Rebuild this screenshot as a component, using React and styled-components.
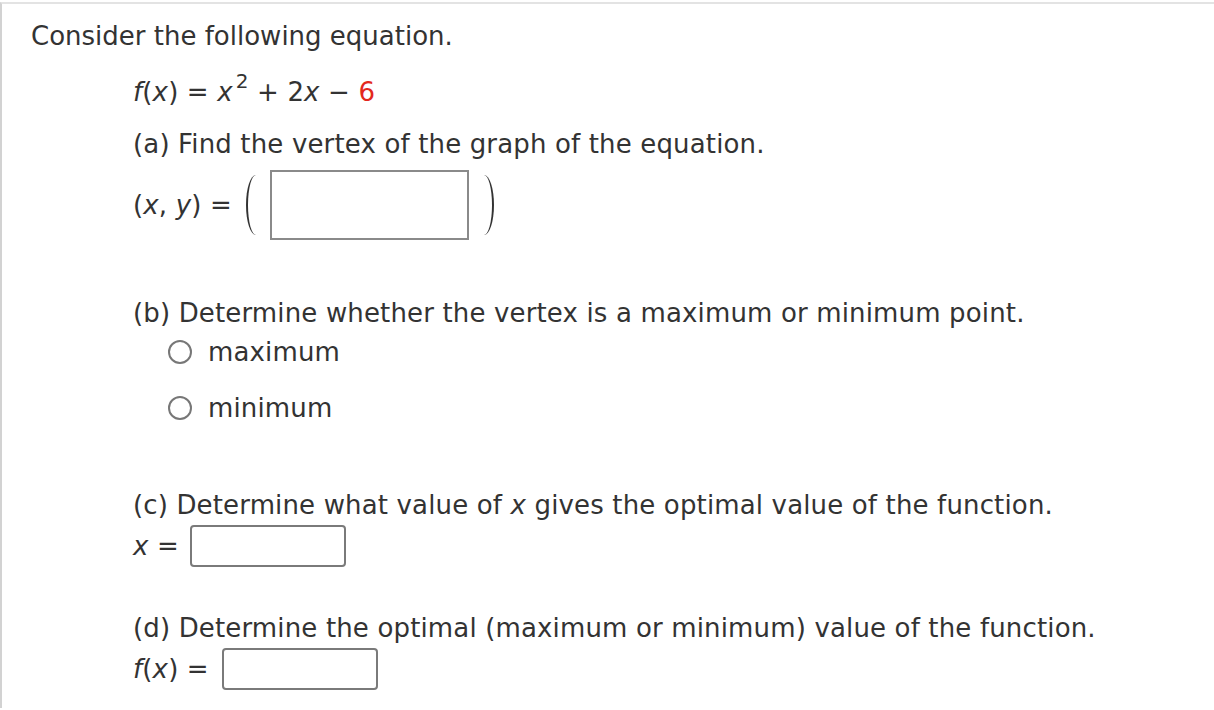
import styled, { createGlobalStyle } from 'styled-components';

const GlobalStyle = createGlobalStyle`
    html, body {
        margin: 0;
        padding: 0;
        background: #fff;
    }
    body {
        font-family: "DejaVu Sans", Verdana, sans-serif;
        color: #333;
        letter-spacing: 0.15px;
    }
`;

const Frame = styled.div`
    margin-top: 2px;
    border-top: 2px solid #e3e3e3;
    border-left: 2px solid #d2d2d2;
    height: 706px;
    box-sizing: border-box;
    padding: 15px 0 0 29px;
`;

const Line = styled.div`
    font-size: 26px;
    line-height: 34px;
    height: 34px;
    margin-top: ${({gap}) => gap || 0}px;
    white-space: nowrap;
`;

const Title = styled(Line)`
    letter-spacing: 0;
`;

const Indent = styled.div`
    padding-left: ${({left}) => left || 102}px;
`;

const I = styled.i`
    font-style: italic;
`;

const Sup = styled.sup`
    font-size: 20px;
    line-height: 0;
    position: relative;
    top: -3px;
    margin-left: 3px;
`;

const Red = styled.span`
    color: #e3281c;
`;

const Row = styled.div`
    display: flex;
    align-items: center;
    font-size: 26px;
    margin-top: ${({gap}) => gap || 0}px;
    white-space: nowrap;
`;

const Label = styled.span`
    margin-right: ${({space}) => space}px;
`;

const Paren = styled.span`
    display: inline-block;
    width: 10px;
    height: 60px;
    box-sizing: border-box;
    border-${({side}) => side}: 2px solid #333;
    border-radius: ${({side}) => side === 'left' ? '100% 0 0 100% / 50% 0 0 50%' : '0 100% 100% 0 / 0 50% 50% 0'};
`;

const BigBox = styled.div`
    width: 199px;
    height: 70px;
    box-sizing: border-box;
    border: 2px solid #8a8a8a;
    margin: 0 15px 0 14px;
`;

const AnswerBox = styled.div`
    width: 156px;
    height: 42px;
    box-sizing: border-box;
    border: 2px solid #7a7a7a;
    border-radius: 4px;
`;

const Radio = styled.label`
    display: flex;
    align-items: center;
    height: 34px;
    font-size: 26px;
    margin-top: ${({gap}) => gap || 0}px;
    padding-left: 35px;
`;

const Circle = styled.span`
    width: 24px;
    height: 24px;
    box-sizing: border-box;
    border: 2px solid #777;
    border-radius: 50%;
    margin-right: 16px;
`;

function App() {
    return <>
        <GlobalStyle />
        <Frame>
            <Title>Consider the following equation.</Title>
            <Indent>
                <Line gap={22}>
                    <I>f</I>(<I>x</I>) = <I>x</I><Sup>2</Sup> + 2<I>x</I> − <Red>6</Red>
                </Line>
                <Line gap={18}>(a) Find the vertex of the graph of the equation.</Line>
                <Row gap={9}>
                    <Label space={14}>(<I>x</I>, <I>y</I>) =</Label>
                    <Paren side="left" />
                    <BigBox />
                    <Paren side="right" />
                </Row>
                <Line gap={56}>(b) Determine whether the vertex is a maximum or minimum point.</Line>
                <Radio gap={5}><Circle />maximum</Radio>
                <Radio gap={22}><Circle />minimum</Radio>
                <Line gap={63}>(c) Determine what value of <I>x</I> gives the optimal value of the function.</Line>
                <Row gap={3}>
                    <Label space={11}><I>x</I> =</Label>
                    <AnswerBox />
                </Row>
                <Line gap={44}>(d) Determine the optimal (maximum or minimum) value of the function.</Line>
                <Row gap={3}>
                    <Label space={13}><I>f</I>(<I>x</I>) =</Label>
                    <AnswerBox />
                </Row>
            </Indent>
        </Frame>
    </>;
}

export default App;
